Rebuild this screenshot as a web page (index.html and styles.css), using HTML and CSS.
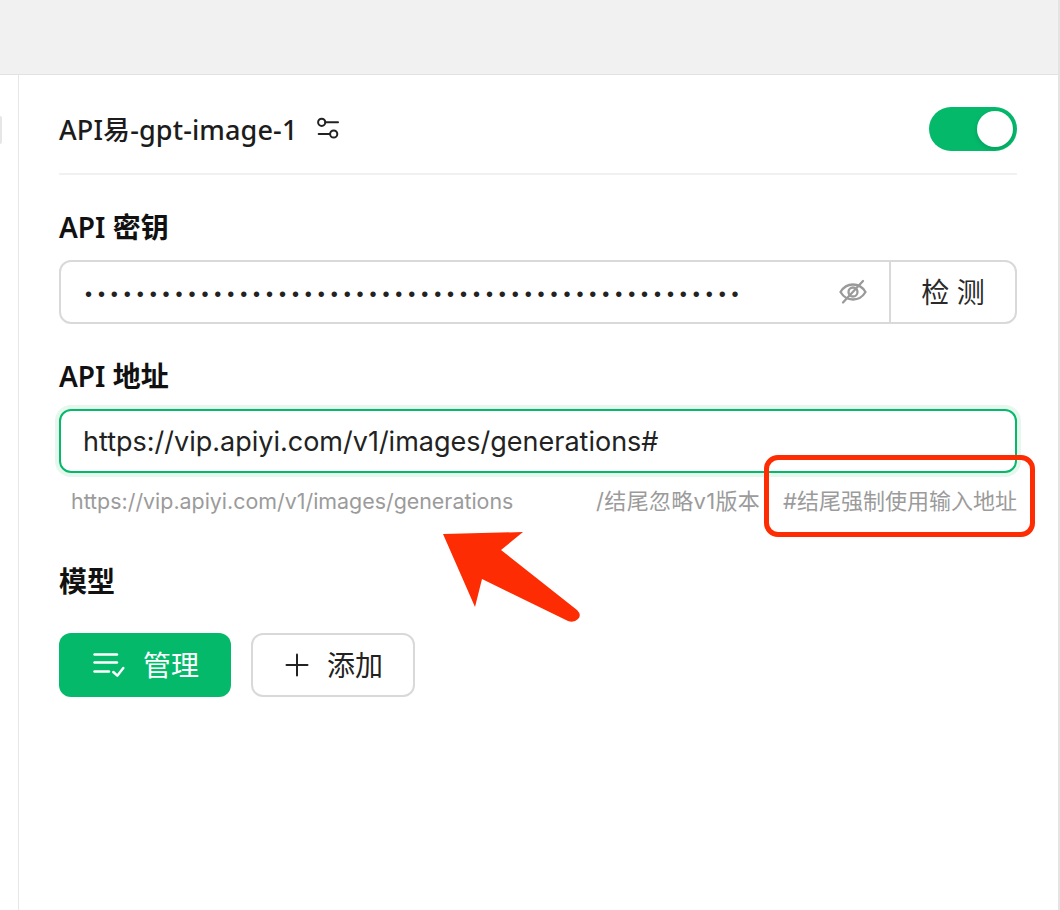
FILE: index.html
```html
<!DOCTYPE html>
<html lang="zh-CN">
<head>
  <meta charset="UTF-8" />
  <title>API易-gpt-image-1</title>
  <link rel="stylesheet" href="styles.css">
</head>
<body>

<div class="topbar"></div>

<div class="main">
  <div class="sidebar"><span class="side-item"></span></div>

  <div class="panel">
    <div class="provider-head">
      <div class="provider-name">
        <span>API易-gpt-image-1</span>
        <svg class="settings-icon" width="24" height="24" viewBox="0 0 24 24" fill="none" stroke="#222" stroke-width="2" stroke-linecap="round">
          <circle cx="4.700" cy="6.300" r="3.600"/>
          <path d="M8.300 6.300H21"/>
          <path d="M1.700 18H13"/>
          <circle cx="16.700" cy="18" r="3.600"/>
        </svg>
      </div>
      <div class="toggle"><span class="knob"></span></div>
    </div>

    <h3 class="label first">API 密钥</h3>
    <div class="key-row">
      <div class="key-input">
        <span class="dots">•••••••••••••••••••••••••••••••••••••••••••••••••••</span>
        <svg width="30" height="30" viewBox="0 0 30 30" fill="none" stroke="#9a9a9a" stroke-width="2.300" stroke-linecap="round">
          <path d="M2.500 15c3-5 7-7.500 12.500-7.500s9.500 2.500 12.500 7.500c-3 5-7 7.500-12.500 7.500S5.500 20 2.500 15z"/>
          <circle cx="15" cy="15" r="4.500"/>
          <path d="M25 4L5 25.500"/>
        </svg>
      </div>
      <button class="check-btn">检 测</button>
    </div>

    <h3 class="label">API 地址</h3>
    <div class="url-input">https://vip.apiyi.com/v1/images/generations#</div>
    <div class="hints">
      <span class="hint-url">https://vip.apiyi.com/v1/images/generations</span>
      <span class="hint-right"><span class="hint-v1">/结尾忽略v1版本</span><span>#结尾强制使用输入地址</span></span>
    </div>

    <h3 class="label models">模型</h3>
    <div class="btn-row">
      <button class="btn primary">
        <svg width="32" height="24" viewBox="0 0 32 24" fill="none" stroke="#fff" stroke-width="2.400" stroke-linecap="round" stroke-linejoin="round">
          <path d="M1.500 1.500H24"/>
          <path d="M1.500 9.500H24"/>
          <path d="M1.500 18.500H16"/>
          <path d="M20.300 19l4 3.700 6-7.700"/>
        </svg>
        管理
      </button>
      <button class="btn">
        <svg width="24" height="24" viewBox="0 0 24 24" fill="none" stroke="#222" stroke-width="2" stroke-linecap="round">
          <path d="M12 1.500v21"/>
          <path d="M1.500 12h21"/>
        </svg>
        添加
      </button>
    </div>
  </div>
</div>

<!-- 标注 -->
<div class="mark-box"></div>
<svg class="mark-arrow" width="160" height="110" viewBox="0 0 160 110">
  <path d="M1 3L81 1L59 19L135 79Q140 84 136 88Q132 92 126 90L40 48L33 76Z" fill="#fd2c03"/>
</svg>

</body>
</html>
```

FILE: styles.css
```css
* {
  box-sizing: border-box;
}
html, body {
  height: 100%;
}
body {
  margin: 0;
  background-color: #fff;
  color: #222;
  font-family: "Noto Sans", "Noto Sans CJK SC", sans-serif;
  overflow: hidden;
  border-right: 2px solid #e4e4e4;
}
.topbar {
  height: 75px;
  background-color: #f1f1f1;
  border-bottom: 1px solid #e2e2e2;
}
.main {
  display: flex;
  height: 835px;
}
.sidebar {
  width: 19px;
  border-right: 1px solid #e6e6e6;
  padding-top: 41px;
  overflow: hidden;
}
.side-item {
  display: block;
  width: 2px;
  height: 28px;
  border-radius: 0 2px 2px 0;
  background-color: #e6e6e6;
}
.panel {
  flex: 1;
  padding: 0 41px 0 40px;
}
.provider-head {
  display: flex;
  justify-content: space-between;
  align-items: center;
  height: 100px;
  padding-top: 8px;
  border-bottom: 2px solid #f1f1f1;
}
.provider-name {
  display: flex;
  align-items: center;
  gap: 20px;
  font-size: 27px;
  font-weight: 500;
  letter-spacing: 0.120px;
  color: #1c1c1c;
}
.toggle {
  width: 88px;
  height: 44px;
  margin-top: 2px;
  border-radius: 22px;
  background-color: #05b96b;
  position: relative;
}
.knob {
  position: absolute;
  top: 4px;
  right: 4px;
  width: 36px;
  height: 36px;
  border-radius: 50%;
  background-color: #fff;
  box-shadow: 0 2px 5px rgba(0, 0, 0, 0.15);
}
.label {
  margin: 0 0 15px;
  font-size: 28px;
  line-height: 36px;
  font-weight: 600;
  color: #111;
}
.label.first {
  margin-top: 34px;
}
.key-row {
  display: flex;
  height: 64px;
  border: 2px solid #d9d9d9;
  border-radius: 12px;
  margin-bottom: 34px;
}
.key-input {
  flex: 1;
  display: flex;
  align-items: center;
  justify-content: space-between;
  padding: 0 21px 0 24px;
}
.dots {
  padding-top: 4px;
  font-family: "Liberation Sans", sans-serif;
  font-size: 20px;
  letter-spacing: 5.930px;
  color: #222;
}
.check-btn {
  width: 126px;
  padding: 0 0 3px;
  border: 0;
  border-left: 2px solid #d9d9d9;
  background: none;
  font-family: inherit;
  font-size: 28px;
  color: #2a2a2a;
}
.url-input {
  height: 64px;
  border: 2px solid #05b96b;
  border-radius: 12px;
  box-shadow: 0 0 0 4px #e6f8ee;
  padding: 0 22px;
  font-family: Inter, sans-serif;
  font-size: 27px;
  line-height: 62px;
  color: #222;
}
.hints {
  display: flex;
  justify-content: space-between;
  padding-left: 12px;
  margin-top: 10px;
  font-family: Inter, "Noto Sans CJK SC", sans-serif;
  font-size: 22px;
  line-height: 36px;
  color: #9b9b9b;
}
.hint-url {
  font-size: 21.400px;
}
.hint-right {
  display: flex;
  gap: 23px;
}
.hint-v1 {
  letter-spacing: 0.300px;
}
.label.models {
  margin-top: 44px;
  margin-bottom: 34px;
}
.btn-row {
  display: flex;
  gap: 20px;
}
.btn {
  display: flex;
  align-items: center;
  justify-content: center;
  gap: 18px;
  width: 164px;
  height: 64px;
  padding: 0 0 2px 2px;
  border: 2px solid #d9d9d9;
  border-radius: 12px;
  background-color: #fff;
  font-family: inherit;
  font-size: 28px;
  color: #222;
}
.btn svg {
  margin-top: 2px;
}
.btn.primary {
  width: 172px;
  border: 0;
  background-color: #05b96b;
  color: #fff;
}
.mark-box {
  position: absolute;
  left: 764px;
  top: 455px;
  width: 271px;
  height: 82px;
  border: 5px solid #fd2c03;
  border-radius: 14px;
}
.mark-arrow {
  position: absolute;
  left: 442px;
  top: 531px;
}
```
